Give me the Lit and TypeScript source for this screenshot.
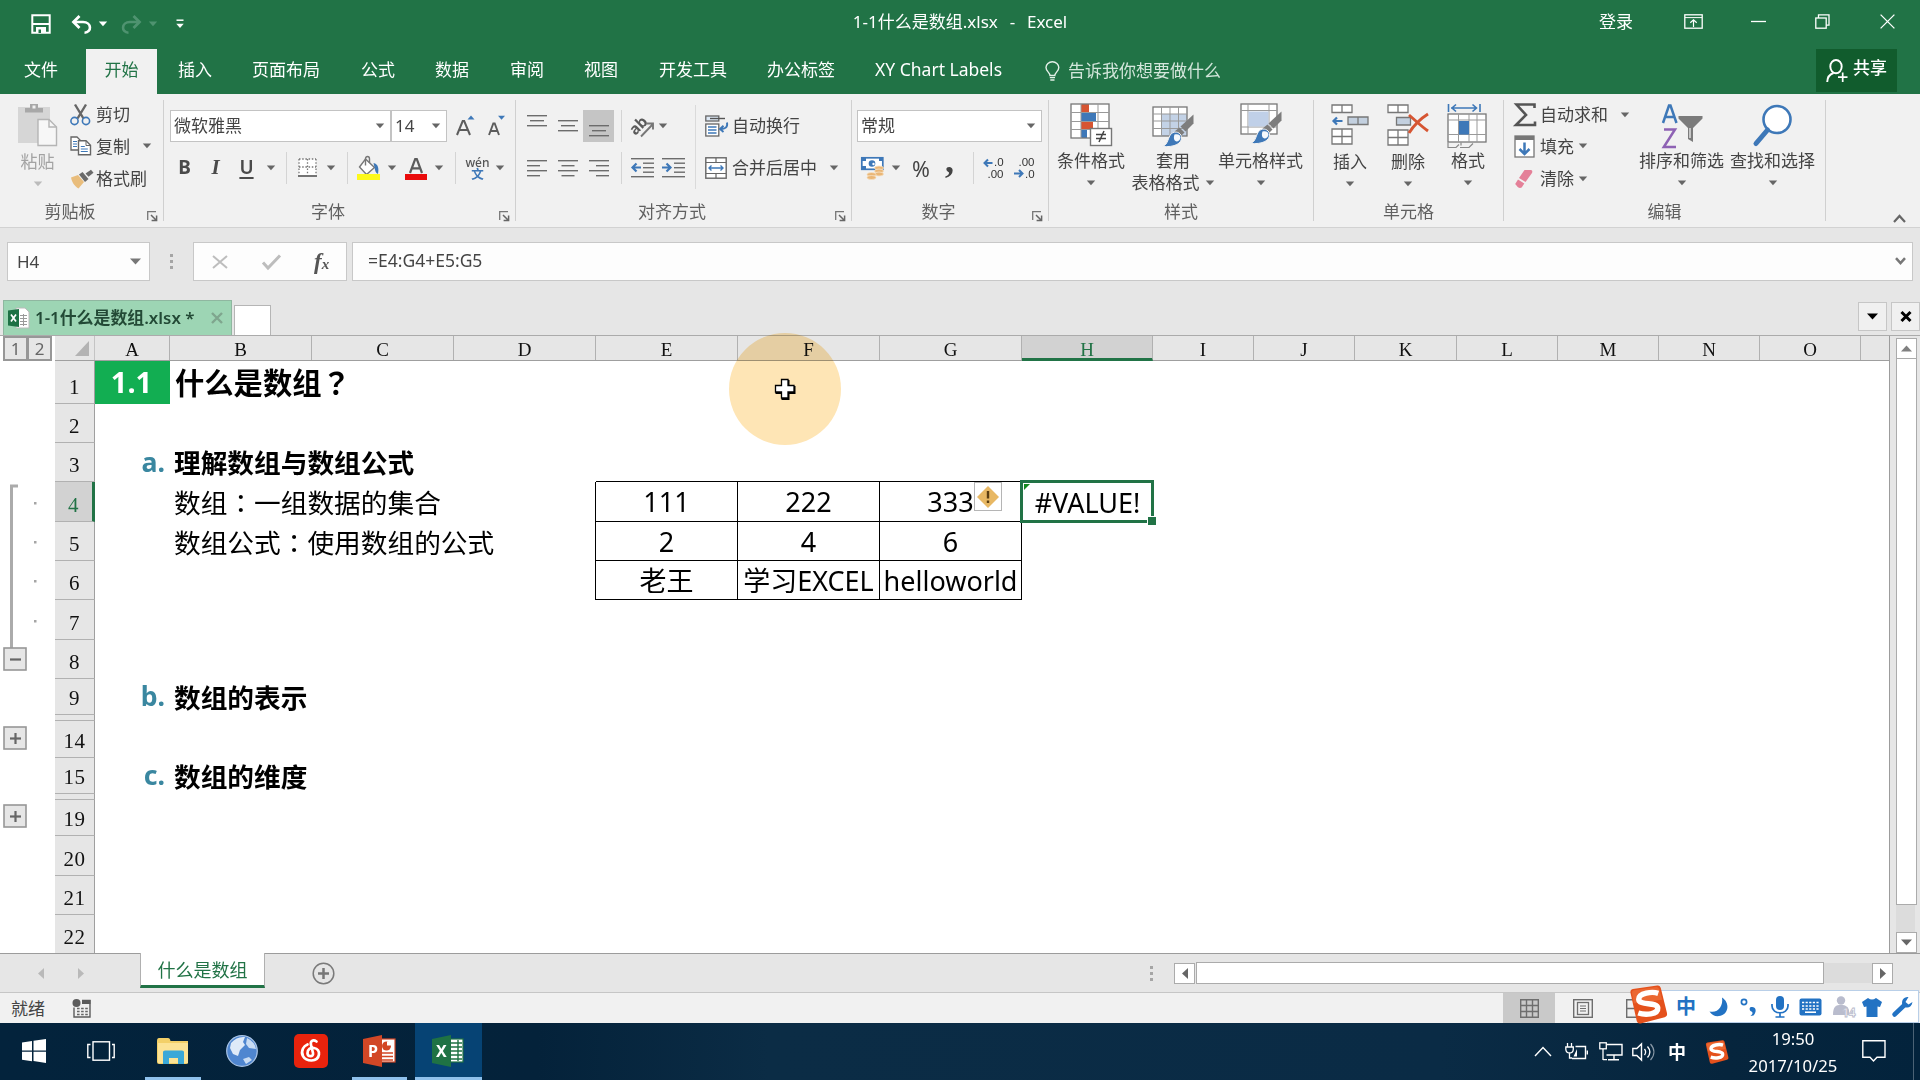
import { LitElement, html, svg, css, unsafeCSS, TemplateResult } from "lit";
import { customElement } from "lit/decorators.js";
import { classMap } from "lit/directives/class-map.js";
import { styleMap } from "lit/directives/style-map.js";

/* Spacing scale: .gN sets the gap before an item, .wN its width. */
const scale = unsafeCSS(
  Array.from({ length: 241 }, (_, n) => `.g${n}{margin-left:${n}px}.w${n}{width:${n}px}`).join("")
);

const ic = (w: number, h: number, body: unknown, cls = "") =>
  html`<svg class="ic ${cls}" width=${w} height=${h} viewBox="0 0 ${w} ${h}" fill="none">${body}</svg>`;

const BLUE = "#3e78b8";

const arrow = (cls = "", color = "#666") =>
  ic(10, 6, svg`<path d="M0.8 .5h8.4L5 5.2z" fill=${color} />`, cls);

const rules = (ws: [number, number][], step = 5, color = "#6c6c6c") =>
  svg`${ws.map(([x, w], i) => svg`<rect x=${x} y=${i * step} width=${w} height="1.4" fill=${color} />`)}`;

const launcher = ic(11, 11, svg`<path d="M.7 9V.7H9" stroke="#777" stroke-width="1.3"/><path d="M4 4l5 5M9.6 4.6v5h-5" stroke="#666" stroke-width="1.5"/>`);

const brush = (x: number, y: number) => svg`<g transform="translate(${x} ${y})">
  <path d="M31 0v9l-8 8-5-5z" fill="#7d7d7d"/><path d="M17 13l5 5-4 4-6-5z" fill="#7d7d7d"/>
  <path d="M0 32c6-2 5-9 9-13 4-3 9-1 10 3 1 7-7 11-19 10z" fill="#3e78b8" stroke="#f1f1f1" stroke-width="1"/>
  <path d="M12 20c3-1 6 0 6 3 0 2-2 4-4 4-3-1-3-4-2-7z" fill="#f5f9fd"/></g>`;

const gridLines = (x: number, y: number, w: number, h: number, vs: number[], hs: number[]) => svg`
  <rect x=${x} y=${y} width=${w} height=${h} stroke="#777" stroke-width="1.3"/>
  ${vs.map((v) => svg`<path d="M${v} ${y}v${h}" stroke="#999" stroke-width="1"/>`)}
  ${hs.map((v) => svg`<path d="M${x} ${v}h${w}" stroke="#999" stroke-width="1"/>`)}`;

const sogou = (s: number) => html`<svg class="ic" width=${s} height=${s} viewBox="0 0 40 40" fill="none">
  <path d="M1.5 8Q1 5 4 4.200L29 .5q3-.5 3.600 2.500L39 29q.6 3-2.400 4L12 39.500q-3 .6-4-2.400z" fill="#e4511c"/>
  <path d="M3 8Q3 6 5 5.500L28 2q2 0 3 2l3 11-29 4z" fill="#f07a44" opacity=".55"/>
  <path d="M30 8.500C24 6.500 10 8 10 14.500c0 7 19 2.500 19.500 9 .5 7-13 7.500-20 5.200" stroke="#fff" stroke-width="5.600"/></svg>`;

const ICONS = {
  save: ic(20, 20, svg`<path d="M1.300 1.300h17.400v17.400H1.300z" stroke="#fff" stroke-width="2"/><path d="M2 10h16" stroke="#fff" stroke-width="2"/><path d="M5 13h10v6H5z" fill="#fff"/><path d="M7.500 15.500h2.500V19H7.500z" fill="#217346"/>`),
  undo: ic(21, 19, svg`<path d="M2.500 7H12c9 0 9 10.500 1.500 10.800" stroke="#fff" stroke-width="2.600"/><path d="M8.500 1L2.500 7l6 6" stroke="#fff" stroke-width="2.800"/>`),
  redo: ic(21, 19, svg`<path d="M18.500 7H9C0 7 0 17.500 7.500 17.800" stroke="#4f9370" stroke-width="2.600"/><path d="M12.500 1l6 6-6 6" stroke="#4f9370" stroke-width="2.800"/>`),
  custom: ic(8, 10, svg`<path d="M.5 1.200h7" stroke="#fff" stroke-width="1.500"/><path d="M.3 4.800h7.400L4 9z" fill="#fff"/>`),
  display: ic(19, 15, svg`<rect x=".8" y=".8" width="17.400" height="13.400" stroke="#fff" stroke-width="1.300"/><path d="M1 3.600h17" stroke="#fff"/><path d="M9.500 13V6M6.300 8.700l3.200-3 3.200 3" stroke="#fff" stroke-width="1.200"/>`),
  min: ic(15, 3, svg`<path d="M0 1.500h15" stroke="#fff" stroke-width="1.300"/>`),
  restore: ic(15, 15, svg`<path d="M3.500 4V.8H14v10.400h-2.800" stroke="#fff" stroke-width="1.300"/><rect x=".8" y="4" width="10.400" height="10.200" stroke="#fff" stroke-width="1.300"/>`),
  close: ic(15, 15, svg`<path d="M.6.6l13.800 13.800M14.400.6L.6 14.400" stroke="#fff" stroke-width="1.300"/>`),
  bulb: ic(15, 20, svg`<path d="M5 14.500c0-3-4-4-4-8a6.300 5.700 0 0 1 12.800 0c0 4-4 5-4 8z" stroke="#e3f0e8" stroke-width="1.400"/><path d="M4.800 16.700h5.200M5.300 19h4.200" stroke="#e3f0e8" stroke-width="1.300"/>`),
  share: ic(22, 24, svg`<ellipse cx="10" cy="7.600" rx="5.700" ry="6.600" stroke="#fff" stroke-width="1.900"/><path d="M1.200 23c.2-5 2.500-7.800 6.300-9" stroke="#fff" stroke-width="1.900"/><path d="M12 18.200h9.500M16.700 13.500V23" stroke="#fff" stroke-width="1.700"/>`),

  paste: ic(41, 44, svg`<rect x="1" y="4" width="32" height="36" fill="#d6d6d6"/><path d="M8 9.500V5h5V1h8v4h5v4.500z" fill="#a8a8a8"/><rect x="15.500" y="2.500" width="3" height="3" fill="#f1f1f1"/><path d="M21 16.500h11l7.500 7.500v18.500H21z" fill="#f7f7f7" stroke="#b5b5b5" stroke-width="1.400"/><path d="M32 16.500V24h7.500" stroke="#b5b5b5" stroke-width="1.400"/>`),
  cut: ic(21, 22, svg`<path d="M5 .5l8.500 14M16 .5L7.500 14.500" stroke="#666" stroke-width="2.400"/><circle cx="4.500" cy="17" r="3.600" stroke=${BLUE} stroke-width="1.600"/><circle cx="16" cy="17" r="3.600" stroke=${BLUE} stroke-width="1.600"/>`),
  copy: ic(22, 20, svg`<path d="M1 1h6l3.500 3.500V14H1z" fill="#fff" stroke="#666" stroke-width="1.300"/><path d="M3 5.500h4M3 8h4M3 10.500h4" stroke=${BLUE}/><path d="M8.500 4.800h7.500l4.500 4.500v9.500h-12z" fill="#fff" stroke="#666" stroke-width="1.400"/><path d="M16 5v4.500h4" stroke="#666"/><path d="M10.800 10.500h4M10.800 13h7M10.800 15.500h7" stroke=${BLUE}/>`),
  painter: ic(24, 20, svg`<path d="M1 8.500l7-2.500 6 7-5.500 6.500C4 17 2 13 1 8.500z" fill="#e9bd7c"/><path d="M9 5.500l3.500-2.500 6 7-3.500 3z" fill="#6a6a6a"/><path d="M15.500 4.500L21 .8l2.500 3-5 4z" fill="#6a6a6a"/>`),

  up: ic(20, 21, svg`<path d="M1 20L6.700 6h1.500L14 20M3.200 15h8.500" stroke="#5c5c5c" stroke-width="2"/><path d="M11.500 4.500h7L15 .5z" fill=${BLUE}/>`),
  down: ic(17, 21, svg`<path d="M1 20L5.300 8.500h1.400L11 20M2.700 16h6.600" stroke="#5c5c5c" stroke-width="1.900"/><path d="M10 .8h7l-3.500 4z" fill=${BLUE}/>`),
  border: ic(19, 19, svg`<rect x="1" y="1" width="17" height="16" fill="#fff"/><path d="M1 1h17M1 9h17M1 1v16M9.500 1v16M18 1v16" stroke="#777" stroke-width="1.300" stroke-dasharray="1.500 1.700"/><path d="M0 18h19" stroke="#555" stroke-width="1.600"/>`),
  fill: ic(25, 24, svg`<path d="M9.500 3l9 8.500-8 7-7-7.500z" fill="#fff" stroke="#777" stroke-width="1.400"/><path d="M9.500 9.500V2.800c0-3 4-3 4 0v4" stroke="#777" stroke-width="1.400"/><path d="M17.500 7c5 1 5.500 6 4.500 11-2.500-1-3-4-3.300-6z" fill=${BLUE}/><rect x="1" y="18" width="23" height="6" fill="#fdf91c"/>`),
  color: ic(24, 24, svg`<path d="M6 17L11.200 3h1.600L18 17M8 12.300h8" stroke="#5c5c5c" stroke-width="2.200"/><rect x="1" y="18" width="22" height="6" fill="#ea0b0b"/>`),

  orient: ic(24, 22, svg`<text x="0" y="17" transform="rotate(-45 7 14)" font-size="15.500" font-weight="700" fill="#5a5a5a" font-family="Noto Sans">ab</text><path d="M10 21.500L22 9M16 8.500h6V14.500" stroke="#777" stroke-width="1.900"/>`),
  wrap: ic(24, 22, svg`<rect x=".8" y="1" width="13" height="5" fill="#dde8f4" stroke="#666" stroke-width="1.300"/><path d="M5 3.500h15" stroke="#555" stroke-width="1.400"/><rect x=".8" y="9" width="13" height="12" fill="#fff" stroke="#666" stroke-width="1.300"/><path d="M3 12h8.500M3 15h8.500M3 18h8.500" stroke=${BLUE} stroke-width="1.300"/><path d="M22 7.500c1 5-2 6.500-6.500 6.500M18.500 10.700L15 14l3.500 3" stroke=${BLUE} stroke-width="1.900"/>`),
  merge: ic(23, 22, svg`<rect x=".8" y=".8" width="20.400" height="20.400" fill="#fff" stroke="#666" stroke-width="1.400"/><path d="M1 5.500h20M1 16.500h20M11 1v4.500M11 16.500V21" stroke="#666" stroke-width="1.200"/><path d="M4 11h14M6.500 8.500L4 11l2.500 2.500M15.500 8.500L18 11l-2.500 2.500" stroke=${BLUE} stroke-width="1.400"/>`),
  outdent: ic(24, 20, svg`${rules([[0, 23]])}<g transform="translate(0 4.500)">${rules([[12, 11], [12, 11], [12, 11]], 4.500)}</g><rect y="18" width="23" height="1.400" fill="#6c6c6c"/><path d="M2 9.500h8M5.500 5.500l-4 4 4 4" stroke=${BLUE} stroke-width="2.200"/>`),
  indent: ic(24, 20, svg`${rules([[0, 23]])}<g transform="translate(0 4.500)">${rules([[12, 11], [12, 11], [12, 11]], 4.500)}</g><rect y="18" width="23" height="1.400" fill="#6c6c6c"/><path d="M0 9.500h8M4.500 5.500l4 4-4 4" stroke=${BLUE} stroke-width="2.200"/>`),

  money: ic(24, 24, svg`<rect x=".8" y="1.800" width="21" height="11.500" fill="#fff" stroke=${BLUE} stroke-width="1.700"/><path d="M1 2h4v3H1zM18 2h4v3h-4zM1 10h4v3H1z" fill=${BLUE}/><circle cx="11" cy="7.500" r="3.300" fill=${BLUE}/><circle cx="12.500" cy="8" r="1.200" fill="#fff"/><g fill="#eab676" stroke="#f5e2c6" stroke-width=".8"><ellipse cx="18" cy="12" rx="4.500" ry="2"/><ellipse cx="18" cy="15" rx="4.500" ry="2"/><ellipse cx="18" cy="18" rx="4.500" ry="2"/><ellipse cx="10.500" cy="18.500" rx="4.500" ry="2"/><ellipse cx="10.500" cy="21.500" rx="4.500" ry="2"/></g>`),
  incDec: ic(23, 22, svg`<text x="11" y="9" class="dec">.0</text><text x="4.500" y="21" class="dec">.00</text><path d="M1.500 6h8M5 2.500L1.500 6 5 9.500" stroke=${BLUE} stroke-width="2"/>`),
  decDec: ic(23, 22, svg`<text x="4.500" y="9" class="dec">.00</text><text x="11" y="21" class="dec">.0</text><path d="M0 16.500h8.500M5 13l3.500 3.500L5 20" stroke=${BLUE} stroke-width="2"/>`),

  cond: ic(42, 44, svg`<rect x="1" y="1" width="38" height="34" fill="#fff"/><rect x="11" y="1" width="8" height="8" fill="#d65532"/><rect x="11" y="10" width="15" height="8" fill=${BLUE}/><rect x="11" y="19" width="12" height="7" fill="#d65532"/><rect x="11" y="27" width="6" height="8" fill=${BLUE}/>${gridLines(1, 1, 38, 34, [11, 28], [9.500, 18.500, 26.500])}<rect x="20.500" y="25.500" width="21" height="17" fill="#fff" stroke="#777" stroke-width="1.400"/><path d="M26 31.500h10M26 35.500h10M34 28l-5 11" stroke="#444" stroke-width="1.500"/>`),
  tableFmt: ic(42, 44, svg`<rect x="1" y="4" width="34" height="29" fill="#fff"/><rect x="10" y="11" width="25" height="22" fill="#c3d2e6"/>${gridLines(1, 4, 34, 29, [9.500, 18, 26.500], [11, 18, 25.500])}${brush(10.500, 11.500)}`),
  cellFmt: ic(42, 44, svg`<rect x="1" y="1" width="36" height="30" fill="#fff"/>${gridLines(1, 1, 36, 30, [8, 29], [7.500, 24])}<rect x="8.500" y="8.500" width="20" height="15" fill="#c0d0e8"/>${brush(10.500, 8.500)}`),

  ins: ic(38, 44, svg`<g stroke="#777" stroke-width="1.300"><path d="M1 2h20v7.500H1zM11 2v7.500M1 26h20v15H1zM11 26v15M1 33.500h20" fill="#fff"/><path d="M17 14h20v7.500H17zM27 14v7.500" fill="#c3d0df"/></g><path d="M2.500 18h9M6 14.500L2.500 18 6 21.500" stroke=${BLUE} stroke-width="2.200"/>`),
  del: ic(43, 44, svg`<g stroke="#777" stroke-width="1.300"><path d="M1 2h20v7.500H1zM11 2v7.500M1 27h20v15H1zM11 27v15M1 34.500h20" fill="#fff"/><path d="M9.500 14.500h14v7.500h-14z" fill="#c3d0df"/></g><path d="M22 12c7 6 12 11 19 16M41 11C33 16 27 22 22 30" stroke="#d65532" stroke-width="2.900"/>`),
  fmt: ic(42, 46, svg`<path d="M1.500 1v8M33 1v8M4 5h26M9 1.500L5 5l4 3.500M25.500 1.500l4 3.500-4 3.500" stroke=${BLUE} stroke-width="1.600"/><rect x="1" y="11" width="38" height="28" fill="#fff"/>${gridLines(1, 11, 38, 28, [11.500, 22, 30], [17, 31.500])}<rect x="12" y="18" width="10" height="13.500" fill=${BLUE}/><path d="M1 39.500v5h8l3-3M13 44.500h9l4-4M14 39.500v3" stroke="#888" stroke-width="1.200"/>`),

  sigma: ic(22, 24, svg`<path d="M20.500 5V1.500H2.500L12 12 2 22h19v-3.500" stroke="#555" stroke-width="2.600"/>`),
  fillDown: ic(21, 23, svg`<rect x="1" y="1" width="19" height="21" fill="#fff" stroke="#777" stroke-width="1.300"/><rect x="1" y="1" width="19" height="4" fill="#777"/><path d="M10.500 7.500v11M5.500 14l5 5 5-5" stroke=${BLUE} stroke-width="2.500"/>`),
  eraser: ic(20, 20, svg`<path d="M10.500 1h6.500q2 .5 1 3l-6.500 9-6.500-4z" fill="#e48098"/><path d="M4 10.500l6.300 4-2.600 4q-2 1-4-.5l-2.500-3z" fill="#e48098"/>`),
  sort: ic(42, 46, svg`<path d="M2 20L8 2.500h1.500L15.500 20M4 14h9.500" stroke=${BLUE} stroke-width="2.500"/><path d="M3 26.500h11L2.800 44H15" stroke="#8e62b4" stroke-width="2.500"/><path d="M17.500 13h24v2.500L32 25v14l-5-3V25l-9.500-9.500z" fill="#7b7b7b"/><path d="M29 25v10" stroke="#f1f1f1" stroke-width="1.300"/>`),
  find: ic(40, 44, svg`<circle cx="24" cy="16.500" r="13.500" fill="#fff" stroke=${BLUE} stroke-width="2.600"/><path d="M14.500 27L3 40.500" stroke=${BLUE} stroke-width="5" stroke-linecap="round"/>`),
  chevUp: ic(13, 9, svg`<path d="M1 8l5.500-6L12 8" stroke="#666" stroke-width="2.200"/>`),

  cancel: ic(16, 14, svg`<path d="M1 1l14 12M15 1L1 13" stroke="#bdbdbd" stroke-width="2"/>`),
  check: ic(19, 16, svg`<path d="M1 8.500l5 5.500L18 1.500" stroke="#bdbdbd" stroke-width="3"/>`),
  chevDown: ic(11, 8, svg`<path d="M1 1.200l4.500 5 4.500-5" stroke="#777" stroke-width="2.500"/>`),
  book: ic(22, 22, svg`<path d="M8 1h9l4 4v16H8z" fill="#fff" stroke="#bbb"/><path d="M12 8.500h7M12 11.500h7M12 14.500h7M12 17.500h7M15.500 7v12" stroke="#9a9a9a"/><path d="M0 3.500L11 2v18L0 18.500z" fill="#1e7145"/><path d="M3 7.500l5 7M8 7.500l-5 7" stroke="#fff" stroke-width="1.700"/>`),
  macro: ic(19, 19, svg`<circle cx="4.500" cy="4" r="4" fill="#5c5c5c"/><path d="M2 8.500V18h16V1.500h-8" stroke="#5c5c5c" stroke-width="1.400"/><rect x="10" y="1" width="8.500" height="4" fill="#5c5c5c"/><path d="M5 9.500h11M5 12.500h11M5 15.500h11" stroke="#666" stroke-width="1.500" stroke-dasharray="2.600 1.500"/>`),
  vNormal: ic(19, 19, svg`<path d="M.7.700h17.600v17.600H.7zM6.500 1v17M12.500 1v17M1 6.500h17M1 12.500h17" stroke="#6e6e6e" stroke-width="1.400"/>`),
  vPage: ic(20, 19, svg`<rect x=".7" y=".7" width="18.600" height="17.600" stroke="#6e6e6e" stroke-width="1.400"/><rect x="4.500" y="3.500" width="11" height="12" stroke="#6e6e6e" stroke-width="1.300"/><path d="M7 7h6M7 9.500h6M7 12h6" stroke="#6e6e6e" stroke-width="1.200"/>`),
  vBreak: ic(12, 19, svg`<path d="M12 .7H.7v17.600H12M1 9.500h11" stroke="#6e6e6e" stroke-width="1.400"/>`),
};

const IME = {
  moon: ic(20, 20, svg`<path d="M13 .5c8 5 7 16-1.500 18.300C7 20 3 18.500.5 14.500 9 16.500 14.500 9 13 .5z" fill="#2272c3"/>`),
  punct: ic(18, 18, svg`<circle cx="4" cy="4" r="2.600" stroke="#2272c3" stroke-width="1.700"/><path d="M10 9.500c5-2 8 3 3.500 8l-3 .5c2.500-2 2.500-3.500 1-4.500-1.500-.5-2.500-2.500-1.500-4z" fill="#2272c3"/>`),
  mic: ic(18, 22, svg`<rect x="5" y="0" width="8" height="14" rx="4" fill="#2272c3"/><path d="M1 8v2c0 9 16 9 16 0V8M9 17v4M4.500 21h9" stroke="#2272c3" stroke-width="1.700"/>`),
  keys: ic(23, 18, svg`<rect x=".5" y=".5" width="22" height="17" rx="2" fill="#2272c3"/><path d="M3 4.500h17M3 8h17M3 11h17" stroke="#fff" stroke-width="1.500" stroke-dasharray="2.200 1.400"/><path d="M6 14.200h11" stroke="#fff" stroke-width="1.600"/>`),
  person: ic(24, 22, svg`<circle cx="8" cy="4.500" r="4.200" fill="#b9bccd"/><path d="M0 19c0-9 3-10 8-10s7 2 8 5v5z" fill="#b9bccd"/><text x="9" y="21" font-size="12" font-weight="700" fill="#fff" stroke="#b9bccd" stroke-width=".9" font-family="Noto Sans">14</text>`),
  shirt: ic(20, 20, svg`<path d="M6 1q4 3 8 0l6 4-2 5-2.500-.6V20H4.500V9.400L2 10 0 5z" fill="#2272c3"/>`),
  wrench: ic(21, 21, svg`<path d="M2.500 18.500l10-9.500" stroke="#2272c3" stroke-width="4.500" stroke-linecap="round"/><path d="M16.500 1c-5-.5-7.500 4-6 8 3 4 9 3.500 10-3l-4 2.500-3-2.500z" fill="#2272c3"/>`),
};

const TASK = {
  start: ic(24, 24, svg`<path d="M0 3.600L10 2v9.500H0zM11.500 1.800L24 0v11.500H11.500zM0 12.800h10v9.500L0 20.700zM11.500 12.800H24V24l-12.500-1.900z" fill="#fff"/>`),
  view: ic(28, 20, svg`<rect x="6" y=".8" width="16.500" height="18.400" stroke="#fff" stroke-width="1.400"/><path d="M3.500 3.500H.8v13h2.700M25 3.500h2.200v13H25" stroke="#fff" stroke-width="1.400"/>`),
  folder: ic(32, 27, svg`<path d="M0 3Q0 0 2 0h9q2 0 2.500 3H31v22q0 1-2 1H2q-2 0-2-2z" fill="#f3d068"/><path d="M1 5h30v20H1z" fill="#fce395"/><path d="M6 14q0-1.500 2-1.500h17q2 0 2 1.500v12h-6v-6h-9v6H6z" fill="#3aa8d8"/>`),
  globe: ic(32, 32, svg`<circle cx="16" cy="16" r="15.300" fill="#4f86d0" stroke="#a9c4e6" stroke-width="1.200"/><path d="M5 8q6-7 14-6l-2 5 2 3-5 5-2 6-5-2-3-6z" fill="#dfeaf8"/><path d="M21 3q8 4 9 11l-7-1-3-4zM17 24l6-2 3 3-6 4z" fill="#c9dcf3"/>`),
  netease: ic(34, 34, svg`<rect width="34" height="34" rx="5" fill="#e9230d"/><path d="M22.500 7.500c-3.500-2.500-6.500-.5-5.500 3.500l2 8c.8 4-5.200 4.300-5.500.3-.2-4 3-5.800 6.500-5.300 7.500 1 6.500 12-2.500 12.500C9 26.500 6.500 19.500 9 14.500c1-2 2.500-3.200 4.500-4" stroke="#fff" stroke-width="2.700" stroke-linecap="round"/>`),
  ppt: ic(33, 32, svg`<rect x="16" y="4" width="16" height="23" fill="#fff" stroke="#d24726" stroke-width="1.200"/><circle cx="23.500" cy="11" r="4.500" fill="#d24726"/><path d="M24 10.500V6.500h4v4z" fill="#fff"/><path d="M19 18h11M19 21.500h11M19 25h11" stroke="#d24726" stroke-width="1.600"/><path d="M0 4L19 0v32L0 28z" fill="#d24726"/><text x="5" y="22" font-size="16" font-weight="700" fill="#fff" font-family="Noto Sans">P</text>`),
  xls: ic(33, 32, svg`<rect x="16" y="4" width="15" height="23" fill="#fff" stroke="#1f7244" stroke-width="1.200"/><path d="M19 8h11M19 12h11M19 16h11M19 20h11M19 24h11M26 5v21" stroke="#1f7244" stroke-width="1.400"/><path d="M0 4L19 0v32L0 28z" fill="#1f7244"/><text x="4" y="22" font-size="16" font-weight="700" fill="#fff" font-family="Noto Sans">X</text>`),
  chev: ic(18, 11, svg`<path d="M1 10l8-8.500L17 10" stroke="#fff" stroke-width="1.400"/>`),
  power: ic(23, 18, svg`<path d="M2.500 0v4M6.500 0v4M.8 4h7.500v2q0 4-3.700 4T.8 6zM4.500 10v5H7" stroke="#fff" stroke-width="1.300"/><path d="M10.500 3.500h10v12H7" stroke="#fff" stroke-width="1.400"/><path d="M22.300 7.500v4" stroke="#fff" stroke-width="1.400"/><path d="M8.500 13.500l3.500-7.500v7.500z" fill="#fff"/>`),
  net: ic(24, 19, svg`<path d="M8 2.500h15v10.500H7.500M15 13v4M9 17.700h11" stroke="#fff" stroke-width="1.400"/><rect x=".8" y=".8" width="6.500" height="6" stroke="#fff" stroke-width="1.300"/><path d="M4 7v11M4 17.700h4" stroke="#fff" stroke-width="1.300"/>`),
  vol: ic(24, 20, svg`<path d="M.8 6.500h4L9.500 2v16l-4.700-4.500h-4z" stroke="#fff" stroke-width="1.400"/><path d="M12.500 7c1.500 2 1.500 4 0 6M15.500 4.500c3 3.500 3 7.500 0 11" stroke="#fff" stroke-width="1.300"/><path d="M18.500 2c4.500 5 4.500 11 0 16" stroke="#8b9aa8" stroke-width="1.200"/>`),
  note: ic(24, 23, svg`<path d="M.8.800h22.200v16.400h-8L11.500 21 8 17.200H.8z" stroke="#fff" stroke-width="1.400"/>`),
};

type Col = { id: string; w: number };
type Row = { id: string; h: number };

const COLS: Col[] = [
  ["A", 75], ["B", 142], ["C", 142], ["D", 142], ["E", 142], ["F", 142], ["G", 142], ["H", 131],
  ["I", 101], ["J", 101], ["K", 102], ["L", 101], ["M", 101], ["N", 101], ["O", 101],
].map(([id, w]) => ({ id: id as string, w: w as number }));

/* Rows with an empty id stand for collapsed outline groups. */
const ROWS: Row[] = [
  ["1", 43], ["2", 39], ["3", 39], ["4", 40], ["5", 39], ["6", 39], ["7", 40], ["8", 39], ["9", 36],
  ["", 6], ["14", 37], ["15", 36], ["", 6], ["19", 36], ["20", 40], ["21", 39], ["22", 39],
].map(([id, h]) => ({ id: id as string, h: h as number }));

const CELLS: Record<string, [string, string]> = {
  A1: ["1.1", "badge"],
  B1: ["什么是数组？", "title"],
  A3: ["a.", "mark"], B3: ["理解数组与数组公式", "bold"],
  B4: ["数组：一组数据的集合", "plain"],
  B5: ["数组公式：使用数组的公式", "plain"],
  A9: ["b.", "mark"], B9: ["数组的表示", "bold"],
  A15: ["c.", "mark"], B15: ["数组的维度", "bold"],
  E4: ["111", "mid"], F4: ["222", "mid"], G4: ["333", "mid"], H4: ["#VALUE!", "mid"],
  E5: ["2", "mid"], F5: ["4", "mid"], G5: ["6", "mid"],
  E6: ["老王", "mid"], F6: ["学习EXCEL", "mid"], G6: ["helloworld", "mid"],
};

@customElement("app-root")
export class AppRoot extends LitElement {
  static styles = css`
    :host { display: block; width: 1920px; height: 1080px; overflow: hidden; background: #e6e6e6;
      font-family: "Noto Sans", "Noto Sans CJK SC", sans-serif; font-size: 17px; line-height: 1; color: #444; white-space: nowrap; }
    * { box-sizing: border-box; }
    ${scale}
    .ic { display: block; flex: none; overflow: visible; }
    .app { display: flex; flex-direction: column; height: 1080px; }
    .row { display: flex; align-items: center; }
    .row > *, .fx > * { flex: none; }
    .push { margin-left: auto; }

    .titlebar { height: 49px; background: #217346; color: #fff; display: grid; grid-template-columns: 1fr auto 1fr; }
    .titlebar > * { height: 42px; }
    .titlebar .quick { height: 48px; }
    .titlebar .name { white-space: pre; font-size: 17px; word-spacing: 1.500px; }
    .winbtns { justify-content: flex-end; padding-right: 25px; }
    .tabs { height: 45px; background: #217346; color: #fff; align-items: stretch; }
    .tabs > * { display: flex; align-items: center; padding-bottom: 3px; }
    .tabs .active { background: #f1f1f1; color: #217346; width: 71px; justify-content: center; }
    .tabs .xy { font-size: 17.500px; }
    .tabs .tell { color: #d3e6db; padding-bottom: 1px; }
    .tabs .bulb { padding-bottom: 1px; }
    .tabs .share { width: 81px; height: 43px; background: #115c2d; margin-right: 23px; padding: 0 0 6px 10px; font-weight: 500; }
    .tabs .share .ic { margin-top: 7px; }

    .ribbon { height: 135px; background: #f1f1f1; border-bottom: 1px solid #d2d2d2; display: flex; padding-top: 6px; }
    .group { height: 121px; border-right: 1px solid #d0d0d0; display: flex; flex-direction: column; flex: none; }
    .g-clip { width: 164px; } .g-font { width: 352px; } .g-align { width: 336px; } .g-num { width: 197px; }
    .g-style { width: 265px; } .g-cells { width: 190px; } .g-edit { width: 322px; }
    .body { height: 100px; display: flex; flex: none; }
    .foot { height: 24px; display: flex; align-items: center; color: #606060; flex: none; }
    .foot span { flex: 1; text-align: center; }
    .foot i { width: 23px; padding: 9px 0 0 7px; }
    .two { display: grid; grid-template-rows: 42px 42px; padding-top: 5px; }
    .stack { display: grid; grid-template-rows: 30px 33px 32px; }
    .big { display: grid; grid-template-rows: 46px 24px 20px; justify-items: center; align-items: center; padding-top: 3px; }
    .big > .ic:first-child { align-self: start; }
    .low { grid-template-rows: 46px 26px 19px; }
    .dim { color: #a3a3a3; }
    .box { height: 32px; background: #fff; border: 1px solid #c3c3c3; display: flex; align-items: center; justify-content: space-between; padding: 0 5px 0 3px; }
    .sep { width: 1px; height: 32px; background: #d4d4d4; }
    .sepb { width: 1px; height: 42px; background: #dadada; }
    .b, .i, .u { font-size: 19px; text-align: center; color: #4a4a4a; font-weight: 700; }
    .i { font-style: italic; font-family: "Liberation Serif", serif; font-size: 21px; }
    .u { font-weight: 600; text-decoration: underline; text-underline-offset: 3px; text-decoration-thickness: 2px; }
    .wen { display: grid; justify-items: center; font-size: 12px; line-height: 12px; color: #555; font-weight: 500; padding-top: 2px; }
    .wen b { color: #3e78b8; font-size: 12.500px; line-height: 12px; font-weight: 700; }
    .on { background: #c5c5c5; height: 32px; display: flex; align-items: center; justify-content: center; padding-top: 10px; }
    .up5 { margin-bottom: 10px; } 
    .pct { font-size: 21.500px; padding-top: 2px; }
    .comma { font: 700 36px/20px "Liberation Serif", serif; height: 36px; }
    .dec { font-family: "Liberation Sans", sans-serif; font-size: 11.500px; fill: #333; }
    .fold { align-self: flex-end; margin: 0 14px 4px auto; }

    .formula { height: 53px; padding-top: 14px; display: flex; flex: none; }
    .formula > .fbox { height: 39px; background: #fdfdfd; border: 1px solid #c8c8c8; display: flex; align-items: center; }
    .nm { width: 143px; margin-left: 7px; justify-content: space-between; padding: 0 8px 0 9px; }
    .grip { display: grid; gap: 3px; width: 3px; align-content: center; }
    .grip b { width: 3px; height: 3px; background: #a5a5a5; }
    .fbtn { width: 154px; } .fin { width: 1561px; margin-left: 5px; padding: 0 6px 2px 15px; justify-content: space-between; font-size: 17.500px; }
    .fx-i { font-family: "Liberation Serif", serif; font-style: italic; font-size: 23px; font-weight: 700; color: #555; margin-left: 33px; }
    .fx-i small { font-size: 15px; }

    .docs { height: 55px; border-bottom: 1px solid #ababab; display: flex; align-items: flex-end; flex: none; }
    .doc { width: 229px; height: 35px; margin-left: 3px; background: #9dd5b4; border: 1px solid #8fb7a0; border-bottom: 0; display: flex; align-items: center; padding-left: 4px; font-weight: 600; color: #234a36; font-size: 16.900px; }
    .doc span { margin-left: 5px; width: 176px; }
    .newdoc { width: 37px; height: 30px; margin-left: 2px; background: #fff; border: 1px solid #b5b5b5; border-bottom: 0; }
    .sq { width: 29px; height: 29px; border: 1px solid #c6c6c6; background: #f0f0f0; display: grid; place-items: center; margin-bottom: 4px; }

    .work { height: 618px; display: flex; flex: none; position: relative; }
    .outline { width: 55px; height: 617px; overflow: hidden; background: #fff; flex: none; }
    .levels { height: 25px; display: flex; padding-left: 3px; }
    .levels b { width: 25px; height: 25px; margin-right: -1px; border: 2px solid #979797; background: #e6e6e6; font: 17px "Noto Sans"; color: #666; display: grid; place-items: center; line-height: 17px; }
    .sheet { width: 1835px; flex: none; background: #fff; border-right: 1px solid #9c9c9c; overflow: hidden; height: 617px; }
    .heads { height: 25px; display: flex; background: #e6e6e6; border-bottom: 1px solid #9f9f9f; }
    .corner { width: 40px; display: flex; justify-content: flex-end; align-items: flex-end; padding: 0 5px 4px 0; border-right: 1px solid #c4c4c4; }
    .heads .h { border-right: 1px solid #b1b1b1; text-align: center; font: 19px/28px "Liberation Serif", serif; color: #111; flex: none; height: 24px; }
    .heads .sel { background: #d2d2d2; color: #217346; border-bottom: 3px solid #217346; height: 25px; }
    .line { display: flex; }
    .num { width: 40px; background: #e6e6e6; border-right: 1px solid #9f9f9f; border-bottom: 1px solid #b1b1b1; flex: none; display: flex; align-items: flex-end; justify-content: center; font: 21px/31px "Liberation Serif", serif; letter-spacing: .5px; color: #111; }
    .num.sel { background: #d2d2d2; color: #217346; border-right: 3px solid #217346; }
    .cell { flex: none; display: flex; align-items: center; font-size: 26.700px; color: #000; padding: 2px 0 0 4px; }
    .jp { font-family: "Noto Sans CJK JP", sans-serif; }
    .mid { justify-content: center; padding: 0; font-size: 27px; }
    .bold { font-weight: 700; } .title { font-weight: 700; font-size: 29.300px; padding-left: 5px; padding-top: 0; }
    .mark { font-weight: 700; color: #3a87a0; justify-content: flex-end; padding: 0 5px 1px 0; }
    .badge { background: #12ae52; color: #fff; font-weight: 700; font-size: 29px; justify-content: center; padding: 0 2px 3px 0; }
    .br { border-right: 1px solid #000; } .bb { border-bottom: 1px solid #000; }

    .pick { position: absolute; left: 1020px; top: 144px; width: 134px; height: 43px; border: 3px solid #217346; }
    .pick::before { content: ""; position: absolute; left: 1px; top: 1px; border: 3px solid #138a1f; border-right-color: transparent; border-bottom-color: transparent; }
    .pick::after { content: ""; position: absolute; right: -5px; bottom: -5px; width: 8px; height: 8px; background: #217346; border: 1px solid #fff; border-width: 1px 0 0 1px; }
    .warn { position: absolute; left: 974px; top: 146px; width: 28px; height: 29px; border: 1px solid #b5b5b5; background: #fff; display: grid; place-items: center; }
    .halo { position: absolute; left: 729px; top: -3px; width: 112px; height: 112px; border-radius: 50%; background: #fee5b5; mix-blend-mode: multiply; }
    .cursor { position: absolute; left: 774px; top: 42px; }

    .vbar { width: 30px; flex: none; padding: 2px 5px 0 6px; display: flex; flex-direction: column; height: 617px; }
    .sb { width: 21px; border: 1px solid #ababab; background: #fff; display: grid; place-items: center; flex: none; }
    .vthumb { height: 547px; margin-top: -1px; } .vtrack { height: 29px; background: #dcdcdc; } .s20 { height: 21px; } 

    .sheets { display: flex; flex: none; margin-top: -1px; border-bottom: 1px solid #c6c6c6; height: 40px; }
    .sheets .l { width: 140px; border-top: 1px solid #9c9c9c; display: flex; align-items: center; padding-left: 38px; }
    .stab { width: 125px; height: 35px; background: #fff; border: 1px solid #b0b0b0; border-top: 0; border-bottom: 3px solid #217346; color: #217346; font-size: 18px; display: grid; place-items: center; padding-top: 2px; }
    .sheets .r { flex: 1; border-top: 1px solid #9c9c9c; display: flex; align-items: center; }
    .hthumb { width: 628px; height: 22px; border: 1px solid #ababab; background: #fff; margin-left: 1px; }
    .htrack { width: 48px; height: 20px; background: #dcdcdc; }

    .status { height: 30px; background: #f1f1f1; display: flex; align-items: center; flex: none; position: relative; }
    .vn { width: 52px; height: 30px; background: #c9c9c9; display: grid; place-items: center; margin-left: auto; }
    .ime { position: absolute; right: 1px; top: -3px; width: 272px; height: 33px; background: #fff; border: 1px solid #b9cfe8; border-left: 0; display: flex; align-items: center; color: #2272c3; font-weight: 700; font-size: 20px; }
    .ime .logo { margin: -4px 0 0 -18px; }

    .taskbar { height: 57px; flex: none; display: flex; align-items: center; color: #fff;
      background: linear-gradient(90deg, #03233c 0, #04223a 28%, #0b2c45 40%, #0a2b45 75%, #06253d 90%, #03233c 100%); }
    .task { height: 57px; display: grid; place-items: center; border-bottom: 3px solid transparent; padding-top: 2px; }
    .run { border-color: #8fc1ec; } .cur { background: #064374; width: 67px; }
    .clock { width: 94px; text-align: center; line-height: 27px; font-size: 16.700px; }
    .zh { font-size: 18px; font-weight: 700; }
    .peek { width: 1px; height: 57px; background: #4b6275; margin-left: 27px; }
  `;

  private foot(label: string, more = false) {
    return html`<div class="foot"><span>${label}</span>${more ? html`<i>${launcher}</i>` : ""}</div>`;
  }

  private big(cls: string, icon: TemplateResult, label: string, extra: unknown = arrow(), low = false) {
    return html`<div class="big ${low ? "low" : ""} ${cls}">${icon}<span>${label}</span>${extra}</div>`;
  }

  private header() {
    const tab = (g: number, t: string) => html`<span class="g${g}">${t}</span>`;
    return html`
      <div class="titlebar">
        <div class="row quick"><span class="g31">${ICONS.save}</span><span class="g20">${ICONS.undo}</span>${arrow("g6", "#fff")}
          <span class="g13">${ICONS.redo}</span>${arrow("g6", "#4f9370")}<span class="g18">${ICONS.custom}</span></div>
        <div class="row name">1-1什么是数组.xlsx  -  Excel</div>
        <div class="row winbtns"><span>登录</span><span class="g51">${ICONS.display}</span><span class="g48">${ICONS.min}</span>
          <span class="g49">${ICONS.restore}</span><span class="g50">${ICONS.close}</span></div>
      </div>
      <div class="row tabs">
        ${tab(24, "文件")}<span class="active g28">开始</span>${tab(21, "插入")}${tab(40, "页面布局")}${tab(41, "公式")}
        ${tab(40, "数据")}${tab(41, "审阅")}${tab(40, "视图")}${tab(41, "开发工具")}${tab(40, "办公标签")}
        <span class="xy g40 w128">XY Chart Labels</span><span class="bulb g42">${ICONS.bulb}</span><span class="tell g8">告诉我你想要做什么</span>
        <span class="share push">${ICONS.share}<span class="g5">共享</span></span>
      </div>`;
  }

  private ribbon() {
    const al = (ws: [number, number][], h: number) => ic(20, h, rules(ws));
    const L: [number, number][] = [[0, 20], [0, 13], [0, 20], [0, 13]];
    const C: [number, number][] = [[0, 20], [3.5, 13], [0, 20], [3.5, 13]];
    const R: [number, number][] = [[0, 20], [7, 13], [0, 20], [7, 13]];
    const T: [number, number][] = [[0, 20], [3, 14], [0, 20]];
    return html`<div class="ribbon">
      <div class="group g-clip">
        <div class="body">
          <div class="big low g17 w41 dim">${ICONS.paste}<span>粘贴</span>${arrow("", "#bbb")}</div>
          <div class="stack g12">
            <div class="row">${ICONS.cut}<span class="g5">剪切</span></div>
            <div class="row">${ICONS.copy}<span class="g4">复制</span>${arrow("g12")}</div>
            <div class="row">${ICONS.painter}<span class="g2">格式刷</span></div>
          </div>
        </div>${this.foot("剪贴板", true)}
      </div>
      <div class="group g-font">
        <div class="body two">
          <div class="row"><div class="box g6 w221">微软雅黑${arrow()}</div><div class="box w56">14${arrow()}</div>
            <span class="g9 w20">${ICONS.up}</span><span class="g12">${ICONS.down}</span></div>
          <div class="row"><span class="b g13 w15">B</span><span class="i g16 w15">I</span><span class="u g16 w15">U</span>${arrow("g12")}
            <span class="sep g10"></span><span class="g11">${ICONS.border}</span>${arrow("g9")}<span class="sep g11"></span>
            <span class="g8">${ICONS.fill}</span>${arrow("g6")}<span class="g7">${ICONS.color}</span>${arrow("g6")}<span class="sep g11"></span>
            <span class="wen g9 w25"><span>wén</span><b>文</b></span>${arrow("g5")}</div>
        </div>${this.foot("字体", true)}
      </div>
      <div class="group g-align">
        <div class="body two">
          <div class="row"><span class="g11 up5">${al(T, 12)}</span><span class="g11">${al(T, 12)}</span><span class="on g5 w31">${al(T, 12)}</span>
            <span class="sep g7"></span><span class="g9">${ICONS.orient}</span>${arrow("g3")}<span class="sepb g27"></span>
            <span class="g9">${ICONS.wrap}</span><span class="g3">自动换行</span></div>
          <div class="row"><span class="g11">${al(L, 16)}</span><span class="g11">${al(C, 16)}</span><span class="g11">${al(R, 16)}</span>
            <span class="sep g12"></span><span class="g9">${ICONS.outdent}</span><span class="g7">${ICONS.indent}</span><span class="sepb g9"></span>
            <span class="g9">${ICONS.merge}</span><span class="g4 w85">合并后居中</span>${arrow("g12")}</div>
        </div>${this.foot("对齐方式", true)}
      </div>
      <div class="group g-num">
        <div class="body two">
          <div class="row"><div class="box g5 w185">常规${arrow()}</div></div>
          <div class="row"><span class="g9">${ICONS.money}</span>${arrow("g6")}<span class="pct g11 w18">%</span><span class="comma g15 w12">,</span>
            <span class="sep g16"></span><span class="g9">${ICONS.incDec}</span><span class="g8">${ICONS.decDec}</span></div>
        </div>${this.foot("数字", true)}
      </div>
      <div class="group g-style">
        <div class="body">
          ${this.big("g8 w68", ICONS.cond, "条件格式")}
          ${this.big("g6 w84", ICONS.tableFmt, "套用", html`<div class="row"><span>表格格式</span>${arrow("g5")}</div>`)}
          ${this.big("g3 w85", ICONS.cellFmt, "单元格样式")}
        </div>${this.foot("样式")}
      </div>
      <div class="group g-cells">
        <div class="body">
          ${this.big("g14 w44", ICONS.ins, "插入", arrow(), true)}
          ${this.big("g14 w44", ICONS.del, "删除", arrow(), true)}
          ${this.big("g16 w44", ICONS.fmt, "格式")}
        </div>${this.foot("单元格")}
      </div>
      <div class="group g-edit">
        <div class="body">
          <div class="stack g10 w116">
            <div class="row">${ICONS.sigma}<span class="g4">自动求和</span>${arrow("g12")}</div>
            <div class="row">${ICONS.fillDown}<span class="g5">填充</span>${arrow("g4")}</div>
            <div class="row">${ICONS.eraser}<span class="g6">清除</span>${arrow("g4")}</div>
          </div>
          ${this.big("g9 w85", ICONS.sort, "排序和筛选")}
          ${this.big("g6 w85", ICONS.find, "查找和选择")}
        </div>${this.foot("编辑")}
      </div>
      <div class="fold">${ICONS.chevUp}</div>
    </div>`;
  }

  private bars() {
    return html`
      <div class="formula">
        <div class="fbox nm"><span>H4</span>${ic(11, 7, svg`<path d="M0 .5h11L5.500 6.500z" fill="#777"/>`)}</div>
        <div class="grip g20"><b></b><b></b><b></b></div>
        <div class="fbox fbtn g20"><span class="g18">${ICONS.cancel}</span><span class="g34">${ICONS.check}</span><span class="fx-i">f<small>x</small></span></div>
        <div class="fbox fin"><span>=E4:G4+E5:G5</span>${ICONS.chevDown}</div>
      </div>
      <div class="docs">
        <div class="doc">${ICONS.book}<span>1-1什么是数组.xlsx *</span>${ic(12, 12, svg`<path d="M1 1l10 10M11 1L1 11" stroke="#7fa68e" stroke-width="2.400"/>`)}</div>
        <div class="newdoc"></div>
        <div class="sq push">${ic(11, 7, svg`<path d="M0 .5h11L5.500 6.500z" fill="#000"/>`)}</div>
        <div class="sq g4">${ic(12, 11, svg`<path d="M1.500 1l9 9M10.500 1l-9 9" stroke="#000" stroke-width="3"/>`)}</div>
      </div>`;
  }

  private outline() {
    const btn = (y: number, plus: boolean) => svg`<rect x="4" y=${y} width="22" height="22" fill="#e6e6e6" stroke="#979797" stroke-width="1.600"/>
      <path d="M10 ${y + 11.5}h11" stroke="#666" stroke-width="2.200"/>${plus ? svg`<path d="M15.500 ${y + 6}v11" stroke="#666" stroke-width="2.200"/>` : ""}`;
    return html`<div class="outline"><div class="levels"><b>1</b><b>2</b></div>
      ${ic(55, 593, svg`<path d="M18 125H11.500V287" stroke="#ababab" stroke-width="3"/>
        ${[141, 180, 219, 259].map((y) => svg`<rect x="34" y=${y} width="2.500" height="2.500" fill="#a5a5a5"/>`)}
        ${btn(287, false)}${btn(366, true)}${btn(444, true)}`)}</div>`;
  }

  /* Full-width marks are set centred in their em box. */
  private label(text: string) {
    return html`<span>${text.split(/([：？])/).map((p) => (/[：？]/.test(p) ? html`<span class="jp">${p}</span>` : p))}</span>`;
  }

  private cell(c: Col, r: Row) {
    const item = CELLS[c.id + r.id];
    const n = Number(r.id);
    const cls: Record<string, boolean> = {
      cell: true,
      br: n >= 4 && n <= 6 && "DEFG".includes(c.id),
      bb: n >= 3 && n <= 6 && "EFG".includes(c.id),
    };
    if (item) cls[item[1]] = true;
    return html`<div class=${classMap(cls)} style=${styleMap({ width: `${c.w}px` })}>${item ? this.label(item[0]) : ""}</div>`;
  }

  private work() {
    return html`<div class="work">
      ${this.outline()}
      <div class="sheet">
        <div class="heads"><div class="corner">${ic(14, 15, svg`<path d="M14 0v15H0z" fill="#b3b3b3"/>`)}</div>
          ${COLS.map((c) => html`<div class="h ${c.id === "H" ? "sel" : ""}" style=${styleMap({ width: `${c.w}px` })}>${c.id}</div>`)}</div>
        ${ROWS.map((r) => html`<div class="line" style=${styleMap({ height: `${r.h}px` })}>
          <div class="num ${r.id === "4" ? "sel" : ""}">${r.id}</div>${r.id ? COLS.slice(0, 8).map((c) => this.cell(c, r)) : ""}</div>`)}
      </div>
      <div class="vbar">
        <div class="sb s20">${ic(11, 7, svg`<path d="M0 6.500h11L5.500 .5z" fill="#808080"/>`)}</div>
        <div class="sb vthumb"></div><div class="vtrack"></div>
        <div class="sb s20">${ic(11, 7, svg`<path d="M0 .5h11L5.500 6.500z" fill="#666"/>`)}</div>
      </div>
      <div class="pick"></div>
      <div class="warn">${ic(22, 22, svg`<path d="M11 0l11 11-11 11L0 11z" fill="#e8b864"/><path d="M11 5v7.500M11 14.500v2.500" stroke="#5b3d10" stroke-width="2.400"/>`)}</div>
      <div class="halo"></div>
      <div class="cursor">${ic(22, 22, svg`<path d="M7.500 2h8v6h6v8h-6v6h-8v-6h-6V8h6z" fill="#000"/><path d="M7.500 1.500h6.500v6h6V14h-6v6H7.500v-6h-6V7.500h6z" fill="#fff" stroke="#000" stroke-width="1.300"/>`)}</div>
    </div>`;
  }

  private bottom() {
    return html`
      <div class="sheets">
        <div class="l">${ic(6, 11, svg`<path d="M6 0v11L0 5.500z" fill="#b9b9b9"/>`)}${ic(6, 11, svg`<path d="M0 0v11l6-5.500z" fill="#b9b9b9"/>`, "g34")}</div>
        <div class="stab">什么是数组</div>
        <div class="r fx"><span class="g47">${ic(23, 23, svg`<circle cx="11.500" cy="11.500" r="10.300" stroke="#7a7a7a" stroke-width="1.500"/><path d="M6 11.500h11M11.500 6v11" stroke="#777" stroke-width="2.500"/>`)}</span>
          <div class="grip push"><b></b><b></b><b></b></div>
          <div class="sb s20 g21">${ic(6, 11, svg`<path d="M6 0v11L0 5.500z" fill="#666"/>`)}</div><div class="hthumb"></div><div class="htrack"></div>
          <div class="sb s20">${ic(6, 11, svg`<path d="M0 0v11l6-5.500z" fill="#666"/>`)}</div><span class="w27"></span></div>
      </div>
      <div class="status"><span class="g11">就绪</span><span class="g27">${ICONS.macro}</span>
        <div class="vn">${ICONS.vNormal}</div><span class="g18">${ICONS.vPage}</span><span class="g33">${ICONS.vBreak}</span><span class="w240"></span><span class="w42"></span>
        <div class="ime fx"><span class="logo">${sogou(39)}</span><span class="g8">中</span><span class="g13">${IME.moon}</span><span class="g11">${IME.punct}</span>
          <span class="g13">${IME.mic}</span><span class="g10">${IME.keys}</span><span class="g11">${IME.person}</span><span class="g5">${IME.shirt}</span><span class="g10">${IME.wrench}</span></div>
      </div>
      <div class="taskbar fx">
        <div class="task g22">${TASK.start}</div><div class="task g41">${TASK.view}</div><div class="task run g30 w56">${TASK.folder}</div>
        <div class="task g25">${TASK.globe}</div><div class="task g36">${TASK.netease}</div><div class="task run g24 w55">${TASK.ppt}</div>
        <div class="task run cur g8">${TASK.xls}</div>
        <span class="push">${TASK.chev}</span><span class="g13">${TASK.power}</span><span class="g11">${TASK.net}</span><span class="g9">${TASK.vol}</span>
        <span class="zh g12">中</span><span class="g19">${sogou(24)}</span><div class="clock g17">19:50<br>2017/10/25</div><span class="g22">${TASK.note}</span><span class="peek"></span><span class="w6"></span>
      </div>`;
  }

  render() {
    return html`<div class="app">${this.header()}${this.ribbon()}${this.bars()}${this.work()}${this.bottom()}</div>`;
  }
}
